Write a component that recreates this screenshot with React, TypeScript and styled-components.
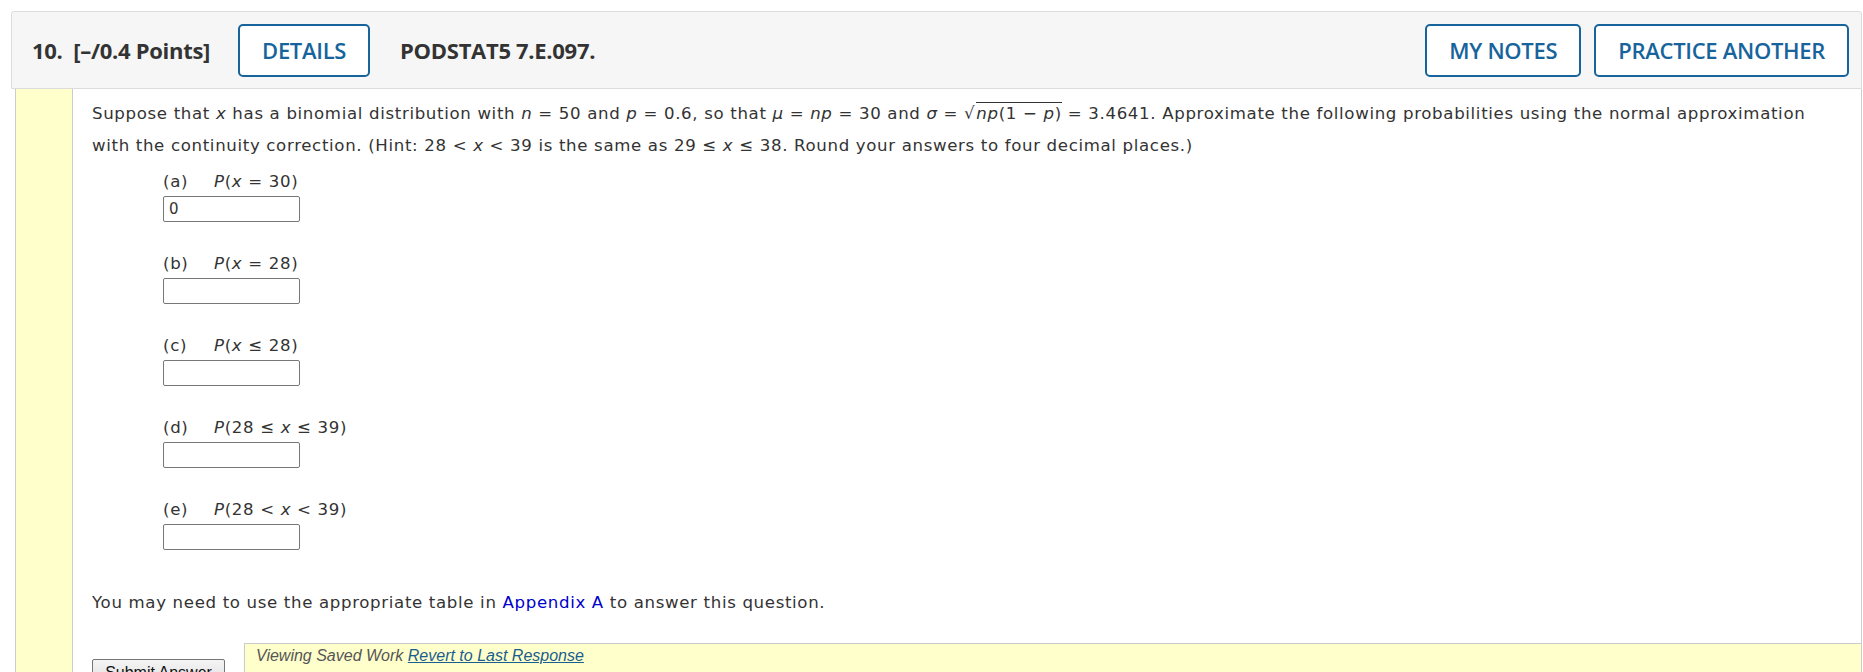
import React from "react";
import styled, { createGlobalStyle } from "styled-components";

const GlobalStyle = createGlobalStyle`
  html, body {
    margin: 0;
    padding: 0;
    background: #fff;
    overflow: hidden;
  }
`;

const Page = styled.div`
  padding: 11px 1px 0 11px;
  font-family: "DejaVu Sans", Verdana, sans-serif;
  color: #333;
`;

const Header = styled.div`
  display: flex;
  align-items: center;
  height: 78px;
  box-sizing: border-box;
  padding: 0 12px 0 20px;
  background: #f6f6f6;
  border: 1px solid #dcdcdc;
  border-radius: 3px 3px 0 0;
  font-family: "Open Sans", "Liberation Sans", sans-serif;
`;

const Title = styled.span`
  font-size: 22px;
  font-weight: 700;
  color: #333;
  letter-spacing: -0.3px;
  white-space: pre;
  margin-right: ${(p) => p.$gap || 0}px;
`;

const OutlineButton = styled.button`
  height: 53px;
  box-sizing: border-box;
  padding: 0 22px;
  border: 2px solid #17649c;
  border-radius: 5px;
  background: #fff;
  color: #17649c;
  font-family: "Open Sans", "Liberation Sans", sans-serif;
  font-size: 22px;
  font-weight: 600;
  letter-spacing: -0.3px;
  margin-right: ${(p) => p.$gap || 0}px;
`;

const Spacer = styled.div`
  flex: 1;
`;

const Body = styled.div`
  display: flex;
  margin-left: 4px;
  border-left: 1px solid #ccc;
  border-right: 1px solid #ccc;
  min-height: 620px;
`;

const Strip = styled.div`
  width: 56px;
  flex: none;
  background: #ffffcc;
  border-right: 1px solid #ccc;
`;

const Content = styled.div`
  flex: 1;
  padding: 9px 0 0 19px;
  font-size: 16.6px;
  letter-spacing: 0.66px;
`;

const Question = styled.p`
  margin: 0;
  line-height: 32px;
  padding-right: 40px;
`;

const V = styled.i`
  font-style: italic;
`;

const Sqrt = styled.span`
  white-space: nowrap;
`;

const Radicand = styled.span`
  border-top: 1px solid #333;
  padding-top: 1px;
  margin-left: 1px;
`;

const Parts = styled.div`
  margin: 8px 0 0 71px;
`;

const Part = styled.div`
  margin-bottom: 30px;
`;

const PartLabel = styled.div`
  line-height: 24px;
  display: flex;
`;

const Letter = styled.span`
  width: 51px;
`;

const AnswerBox = styled.input`
  display: block;
  margin-top: 2px;
  width: 137px;
  height: 26px;
  box-sizing: border-box;
  border: 1px solid #777;
  border-radius: 2px;
  padding: 0 5px;
  font-family: "DejaVu Sans", Verdana, sans-serif;
  font-size: 15px;
  color: #333;
  outline: none;
`;

const Note = styled.p`
  margin: 41px 0 0;
  line-height: 24px;
`;

const Link = styled.a`
  color: #0000cc;
  text-decoration: none;
`;

const Footer = styled.div`
  display: flex;
  align-items: flex-start;
  margin-top: 28px;
  letter-spacing: 0;
`;

const SubmitButton = styled.button`
  margin-top: 16px;
  width: 133px;
  height: 28px;
  box-sizing: border-box;
  border: 1px solid #767676;
  border-radius: 2px;
  background: linear-gradient(#f4f4f4, #dedede);
  font-family: "Liberation Sans", Arial, sans-serif;
  font-size: 16px;
  color: #111;
  padding: 0;
  margin-right: 19px;
`;

const SavedBox = styled.div`
  flex: 1;
  height: 60px;
  box-sizing: border-box;
  background: #ffffcc;
  border-top: 1px solid #ccc;
  border-left: 1px solid #ccc;
  padding: 3px 11px;
  font-family: "Liberation Sans", Arial, sans-serif;
  font-style: italic;
  font-size: 16px;
  color: #555;
`;

const SavedLink = styled.a`
  color: #1a5d8f;
  text-decoration: underline;
`;

const parts = [
  { letter: "(a)", expr: <><V>P</V>(<V>x</V> = 30)</>, value: "0" },
  { letter: "(b)", expr: <><V>P</V>(<V>x</V> = 28)</>, value: "" },
  { letter: "(c)", expr: <><V>P</V>(<V>x</V> ≤ 28)</>, value: "" },
  { letter: "(d)", expr: <><V>P</V>(28 ≤ <V>x</V> ≤ 39)</>, value: "" },
  { letter: "(e)", expr: <><V>P</V>(28 &lt; <V>x</V> &lt; 39)</>, value: "" },
];

export default function App() {
  return (
    <Page>
      <GlobalStyle />
      <Header>
        <Title $gap={28}>{"10.  [–/0.4 Points]"}</Title>
        <OutlineButton $gap={30}>DETAILS</OutlineButton>
        <Title>PODSTAT5 7.E.097.</Title>
        <Spacer />
        <OutlineButton $gap={13}>MY NOTES</OutlineButton>
        <OutlineButton>PRACTICE ANOTHER</OutlineButton>
      </Header>
      <Body>
        <Strip />
        <Content>
          <Question>
            Suppose that <V>x</V> has a binomial distribution with <V>n</V> = 50 and <V>p</V> = 0.6, so that{" "}
            <V>μ</V> = <V>np</V> = 30 and <V>σ</V> ={" "}
            <Sqrt>
              √<Radicand>
                <V>np</V>(1 − <V>p</V>)
              </Radicand>
            </Sqrt>{" "}
            = 3.4641. Approximate the following probabilities using the normal approximation with the continuity
            correction. (Hint: 28 &lt; <V>x</V> &lt; 39 is the same as 29 ≤ <V>x</V> ≤ 38. Round your answers to
            four decimal places.)
          </Question>
          <Parts>
            {parts.map((p) => (
              <Part key={p.letter}>
                <PartLabel>
                  <Letter>{p.letter}</Letter>
                  <span>{p.expr}</span>
                </PartLabel>
                <AnswerBox defaultValue={p.value} />
              </Part>
            ))}
          </Parts>
          <Note>
            You may need to use the appropriate table in <Link href="#">Appendix A</Link> to answer this question.
          </Note>
          <Footer>
            <SubmitButton>Submit Answer</SubmitButton>
            <SavedBox>
              Viewing Saved Work <SavedLink href="#">Revert to Last Response</SavedLink>
            </SavedBox>
          </Footer>
        </Content>
      </Body>
    </Page>
  );
}
